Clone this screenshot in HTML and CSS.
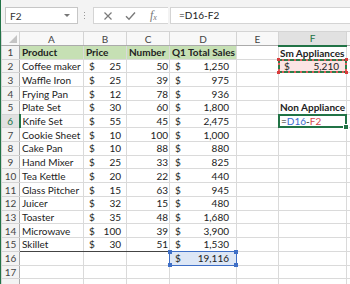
FILE: index.html
```html
<!DOCTYPE html>
<html lang="en">
<head>
    <meta charset="UTF-8">
    <meta name="viewport" content="width=device-width, initial-scale=1.0">
    <title>Product Sales</title>
    <link rel="stylesheet" href="styles.css">
</head>
<body>
    <div class="formula-bar">
        <div class="name-box">
            <span>F2</span>
            <span class="drop"></span>
        </div>
        <div class="dots"><i></i><i></i><i></i></div>
        <div class="fx-box">
            <svg class="icon icon-x" width="10" height="10" viewBox="0 0 10 10">
                <path d="M1.5 1.5 L8.5 8.5 M8.5 1.5 L1.5 8.5" stroke="#7a7a7a" stroke-width="1.2" fill="none"/>
            </svg>
            <svg class="icon icon-check" width="11" height="10" viewBox="0 0 11 10">
                <path d="M1 5.2 L4 8.2 L10 1.5" stroke="#7a7a7a" stroke-width="1.4" fill="none"/>
            </svg>
            <span class="icon icon-fx">f<sub>x</sub></span>
        </div>
        <div class="formula-input">=D16-F2</div>
    </div>

    <table class="sheet">
        <colgroup>
            <col class="col-head">
            <col class="col-a">
            <col class="col-b">
            <col class="col-c">
            <col class="col-d">
            <col class="col-e">
            <col class="col-f">
            <col class="col-g">
        </colgroup>
        <thead>
            <tr>
                <th class="corner"><span class="tri"></span></th>
                <th>A</th>
                <th>B</th>
                <th>C</th>
                <th>D</th>
                <th>E</th>
                <th class="sel-col">F</th>
                <th></th>
            </tr>
        </thead>
        <tbody>
            <tr>
                <th>1</th>
                <td class="hd">Product</td>
                <td class="hd">Price</td>
                <td class="hd">Number</td>
                <td class="hd">Q1 Total Sales</td>
                <td></td>
                <td class="label">Sm Appliances</td>
                <td></td>
            </tr>
            <tr>
                <th>2</th>
                <td>Coffee maker</td>
                <td><div class="acct"><span>$</span><span>25</span></div></td>
                <td class="num">50</td>
                <td><div class="acct wide"><span>$</span><span>1,250</span></div></td>
                <td></td>
                <td class="ref-red"><div class="acct wide"><span>$</span><span>5,210</span></div></td>
                <td></td>
            </tr>
            <tr>
                <th>3</th>
                <td>Waffle Iron</td>
                <td><div class="acct"><span>$</span><span>25</span></div></td>
                <td class="num">39</td>
                <td><div class="acct wide"><span>$</span><span>975</span></div></td>
                <td></td><td></td><td></td>
            </tr>
            <tr>
                <th>4</th>
                <td>Frying Pan</td>
                <td><div class="acct"><span>$</span><span>12</span></div></td>
                <td class="num">78</td>
                <td><div class="acct wide"><span>$</span><span>936</span></div></td>
                <td></td><td></td><td></td>
            </tr>
            <tr>
                <th>5</th>
                <td>Plate Set</td>
                <td><div class="acct"><span>$</span><span>30</span></div></td>
                <td class="num">60</td>
                <td><div class="acct wide"><span>$</span><span>1,800</span></div></td>
                <td></td>
                <td class="label">Non Appliance</td>
                <td></td>
            </tr>
            <tr>
                <th class="sel-row">6</th>
                <td>Knife Set</td>
                <td><div class="acct"><span>$</span><span>55</span></div></td>
                <td class="num">45</td>
                <td><div class="acct wide"><span>$</span><span>2,475</span></div></td>
                <td></td>
                <td class="active">=<span class="blue">D16</span>-<span class="red">F2</span></td>
                <td></td>
            </tr>
            <tr>
                <th>7</th>
                <td>Cookie Sheet</td>
                <td><div class="acct"><span>$</span><span>10</span></div></td>
                <td class="num">100</td>
                <td><div class="acct wide"><span>$</span><span>1,000</span></div></td>
                <td></td><td></td><td></td>
            </tr>
            <tr>
                <th>8</th>
                <td>Cake Pan</td>
                <td><div class="acct"><span>$</span><span>10</span></div></td>
                <td class="num">88</td>
                <td><div class="acct wide"><span>$</span><span>880</span></div></td>
                <td></td><td></td><td></td>
            </tr>
            <tr>
                <th>9</th>
                <td>Hand Mixer</td>
                <td><div class="acct"><span>$</span><span>25</span></div></td>
                <td class="num">33</td>
                <td><div class="acct wide"><span>$</span><span>825</span></div></td>
                <td></td><td></td><td></td>
            </tr>
            <tr>
                <th>10</th>
                <td>Tea Kettle</td>
                <td><div class="acct"><span>$</span><span>20</span></div></td>
                <td class="num">22</td>
                <td><div class="acct wide"><span>$</span><span>440</span></div></td>
                <td></td><td></td><td></td>
            </tr>
            <tr>
                <th>11</th>
                <td>Glass Pitcher</td>
                <td><div class="acct"><span>$</span><span>15</span></div></td>
                <td class="num">63</td>
                <td><div class="acct wide"><span>$</span><span>945</span></div></td>
                <td></td><td></td><td></td>
            </tr>
            <tr>
                <th>12</th>
                <td>Juicer</td>
                <td><div class="acct"><span>$</span><span>32</span></div></td>
                <td class="num">15</td>
                <td><div class="acct wide"><span>$</span><span>480</span></div></td>
                <td></td><td></td><td></td>
            </tr>
            <tr>
                <th>13</th>
                <td>Toaster</td>
                <td><div class="acct"><span>$</span><span>35</span></div></td>
                <td class="num">48</td>
                <td><div class="acct wide"><span>$</span><span>1,680</span></div></td>
                <td></td><td></td><td></td>
            </tr>
            <tr>
                <th>14</th>
                <td>Microwave</td>
                <td><div class="acct"><span>$</span><span>100</span></div></td>
                <td class="num">39</td>
                <td><div class="acct wide"><span>$</span><span>3,900</span></div></td>
                <td></td><td></td><td></td>
            </tr>
            <tr class="last">
                <th>15</th>
                <td>Skillet</td>
                <td><div class="acct"><span>$</span><span>30</span></div></td>
                <td class="num">51</td>
                <td><div class="acct wide"><span>$</span><span>1,530</span></div></td>
                <td></td><td></td><td></td>
            </tr>
            <tr>
                <th>16</th>
                <td></td><td></td><td></td>
                <td class="ref-blue"><div class="acct wide"><span>$</span><span>19,116</span></div></td>
                <td></td><td></td><td></td>
            </tr>
            <tr>
                <th>17</th>
                <td></td><td></td><td></td><td></td><td></td><td></td><td></td>
            </tr>
            <tr>
                <th></th>
                <td></td><td></td><td></td><td></td><td></td><td></td><td></td>
            </tr>
        </tbody>
    </table>
</body>
</html>
```

FILE: styles.css
```css
body {
    margin: 0;
    width: 350px;
    height: 284px;
    overflow: hidden;
    box-sizing: border-box;
    border-left: 1px solid #217346;
    background-color: #fff;
    font-family: Lato, "Liberation Sans", sans-serif;
    font-size: 10px;
    color: #222;
}

/* formula bar */

.formula-bar {
    display: flex;
    align-items: center;
    height: 31px;
    padding-left: 4px;
    background-color: #f3f3f3;
}

.name-box {
    display: flex;
    align-items: center;
    justify-content: space-between;
    width: 73px;
    height: 17px;
    box-sizing: border-box;
    padding: 0 7px 0 4px;
    background-color: #fff;
    border: 1px solid #c6c6c6;
    color: #333;
}

.drop {
    width: 0;
    height: 0;
    border-left: 3px solid transparent;
    border-right: 3px solid transparent;
    border-top: 3px solid #777;
}

.dots {
    display: flex;
    flex-direction: column;
    gap: 2px;
    margin-left: 6px;
}

.dots i {
    width: 1px;
    height: 1px;
    background-color: #999;
}

.fx-box {
    display: flex;
    align-items: center;
    width: 75px;
    height: 17px;
    box-sizing: border-box;
    margin-left: 8px;
    padding-left: 9px;
    background-color: #fff;
    border: 1px solid #d4d4d4;
    border-right: none;
}

.icon-check {
    margin-left: 12px;
}

.icon-fx {
    margin-left: 14px;
    font-family: "Liberation Serif", serif;
    font-style: italic;
    font-size: 12px;
    color: #777;
    line-height: 1;
}

.icon-fx sub {
    font-size: 8px;
    vertical-align: -1px;
}

.formula-input {
    flex: 1;
    height: 17px;
    box-sizing: border-box;
    margin-left: 2px;
    padding-left: 8px;
    line-height: 15px;
    background-color: #fff;
    border: 1px solid #d4d4d4;
    border-right: none;
    color: #222;
}

/* grid */

.sheet {
    table-layout: fixed;
    width: 365px;
    border-collapse: collapse;
}

.col-head { width: 18px; }
.col-a { width: 64px; }
.col-b { width: 43px; }
.col-c { width: 43px; }
.col-d { width: 67px; }
.col-e { width: 42px; }
.col-f { width: 68px; }
.col-g { width: 20px; }

.sheet thead tr {
    height: 14px;
}

.sheet tbody tr {
    height: 13.73px;
}

.sheet th {
    padding: 0;
    font-weight: normal;
    color: #444;
    background-color: #f3f3f3;
    border: 1px solid #d4d4d4;
    text-align: center;
    line-height: 12px;
}

.sheet thead th {
    border-bottom-color: #ababab;
    background-color: #f8f8f8;
}

.sheet tbody th {
    border-right-color: #ababab;
}

.sheet th.corner {
    position: relative;
}

.tri {
    position: absolute;
    right: 2px;
    bottom: 2px;
    width: 0;
    height: 0;
    border-left: 8px solid transparent;
    border-bottom: 8px solid #c4c4c4;
}

.sheet th.sel-col {
    background-color: #e1e1e1;
    color: #217346;
    border-bottom: 2px solid #217346;
}

.sheet th.sel-row {
    background-color: #e1e1e1;
    color: #217346;
    border-right: 2px solid #217346;
}

.sheet td {
    padding: 0 2px;
    border: 1px solid #dadada;
    white-space: nowrap;
    overflow: hidden;
    line-height: 12px;
}

.sheet td.hd {
    background-color: #c6e0b4;
    font-weight: bold;
}

.sheet td.label {
    font-weight: bold;
    padding-left: 1px;
    overflow: visible;
}

.sheet td.num {
    text-align: right;
    padding-right: 1px;
}

.acct {
    display: flex;
    justify-content: space-between;
    padding: 0 3px 0 3px;
}

.acct.wide {
    padding-right: 5px;
}

.sheet tr.last td:nth-of-type(-n+4) {
    border-bottom: 1px solid #444;
}

/* reference boxes */

.sheet td.ref-red,
.sheet td.ref-blue,
.sheet td.active {
    position: relative;
    overflow: visible;
}

.sheet td.ref-red {
    background-color: #fbe4e4;
}

.sheet td.ref-red::before {
    content: "";
    position: absolute;
    inset: -1px;
    background:
        repeating-linear-gradient(90deg, #2e7d4a 0 4px, #e05a5a 4px 6px) top / 100% 2px no-repeat,
        repeating-linear-gradient(90deg, #2e7d4a 0 4px, #e05a5a 4px 6px) bottom / 100% 2px no-repeat,
        repeating-linear-gradient(180deg, #2e7d4a 0 4px, #e05a5a 4px 6px) left / 2px 100% no-repeat,
        repeating-linear-gradient(180deg, #2e7d4a 0 4px, #e05a5a 4px 6px) right / 2px 100% no-repeat;
}

.sheet td.ref-red::after {
    content: "";
    position: absolute;
    inset: -2px;
    background:
        linear-gradient(#d83b3b, #d83b3b) top left / 3px 3px no-repeat,
        linear-gradient(#d83b3b, #d83b3b) top right / 3px 3px no-repeat,
        linear-gradient(#d83b3b, #d83b3b) bottom left / 3px 3px no-repeat,
        linear-gradient(#d83b3b, #d83b3b) bottom right / 3px 3px no-repeat;
}

.sheet td.ref-blue {
    background-color: #dde7f6;
}

.sheet td.ref-blue::before {
    content: "";
    position: absolute;
    inset: -1px;
    border: 1px solid #3f6fc6;
}

.sheet td.ref-blue::after {
    content: "";
    position: absolute;
    inset: -2px;
    background:
        linear-gradient(#3f6fc6, #3f6fc6) top left / 4px 4px no-repeat,
        linear-gradient(#3f6fc6, #3f6fc6) top right / 4px 4px no-repeat,
        linear-gradient(#3f6fc6, #3f6fc6) bottom left / 4px 4px no-repeat,
        linear-gradient(#3f6fc6, #3f6fc6) bottom right / 4px 4px no-repeat;
}

.sheet td.active::before {
    content: "";
    position: absolute;
    inset: -1px;
    border: 2px solid #217346;
}

.sheet td.active::after {
    content: "";
    position: absolute;
    right: -3px;
    bottom: -3px;
    width: 4px;
    height: 4px;
    background-color: #217346;
    border: 1px solid #fff;
}

.blue {
    color: #3a6bd1;
}

.red {
    color: #d9454a;
}
```
